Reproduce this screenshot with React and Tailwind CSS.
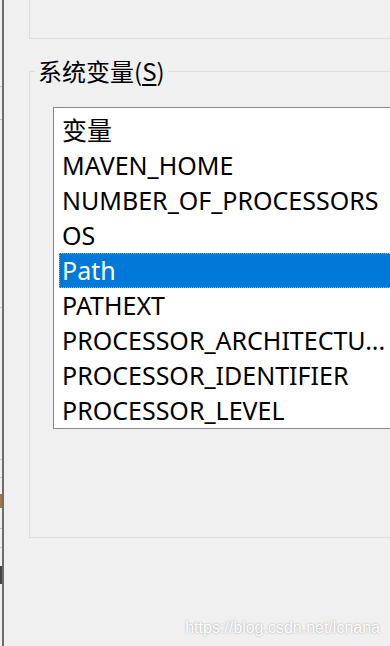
export default function App() {
  const rows = [
    "变量",
    "MAVEN_HOME",
    "NUMBER_OF_PROCESSORS",
    "OS",
    "Path",
    "PATHEXT",
    "PROCESSOR_ARCHITECTU...",
    "PROCESSOR_IDENTIFIER",
    "PROCESSOR_LEVEL",
  ];
  return (
    <div className="relative flex h-[646px] w-[390px] overflow-hidden bg-[#f0f0f0]">
      {/* left strip from the window behind */}
      <div className="flex w-[2px] shrink-0 flex-col bg-[#f0f0f0]">
        <div className="h-[87px] shrink-0 border-b border-[#c8c8c8]" />
        <div className="h-[33px] shrink-0 border-b border-[#c8c8c8]" />
        <div className="h-[188px] shrink-0 border-b border-[#c8c8c8]" />
        <div className="h-[152px] shrink-0 border-b border-[#c8c8c8]" />
        <div className="h-[18px] shrink-0 border-b border-[#c8c8c8]" />
        <div className="h-[16px] shrink-0" />
        <div className="h-[14px] shrink-0 bg-[#a07840]" />
        <div className="h-[21px] shrink-0 border-b border-[#c8c8c8]" />
        <div className="h-[19px] shrink-0 border-b border-[#c8c8c8]" />
        <div className="h-[18px] shrink-0" />
        <div className="h-[18px] shrink-0 bg-[#444]" />
      </div>
      <div className="w-[2px] shrink-0 bg-[#6d6d6d]" />
      <div className="flex min-w-0 flex-1 flex-col pl-[25px]">
        <div className="-mr-[60px] h-[39px] shrink-0 border-b border-l border-[#dcdcdc]" />
        <div className="relative -mr-[60px] mt-[32px] h-[467px] shrink-0 border border-[#dcdcdc] pl-[23px] pt-[35px]">
          <div
            className="absolute left-[5px] top-[-14px] whitespace-nowrap bg-[#f0f0f0] px-[3px] text-[24px] leading-[26px] text-black"
            style={{ fontFamily: '"Noto Sans CJK SC", "Noto Sans", sans-serif' }}
          >
            系统变量(<span className="underline underline-offset-[3px]">S</span>)
          </div>
          <div
            className="h-[322px] w-[420px] overflow-hidden border border-[#828790] bg-white pl-[5px] pt-[5px] text-[25px] leading-[35px] text-black"
            style={{ fontFamily: '"Noto Sans", "Noto Sans CJK SC", sans-serif' }}
          >
            {rows.map((r) =>
              r === "Path" ? (
                <div
                  key={r}
                  className="h-[35px] whitespace-nowrap border border-dotted border-[#e8a050] bg-[#0078d7] pl-[2px] leading-[33px] text-white"
                >
                  {r}
                </div>
              ) : (
                <div key={r} className="h-[35px] whitespace-nowrap pl-[3px]">
                  {r}
                </div>
              )
            )}
          </div>
        </div>
      </div>
      <div
        className="absolute bottom-[9px] right-[10px] text-[16px] leading-[18px] text-white [text-shadow:0_0_2px_#9a9a9a]"
        style={{ fontFamily: '"Liberation Sans", Arial, sans-serif' }}
      >
        https://blog.csdn.net/lcnana
      </div>
    </div>
  );
}
